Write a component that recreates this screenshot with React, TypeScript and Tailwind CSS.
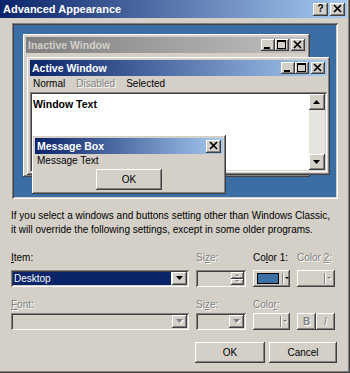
import React from "react";

const RAISED =
  "shadow-[inset_-1px_-1px_0_#404040,inset_1px_1px_0_#ffffff,inset_-2px_-2px_0_#808080,inset_2px_2px_0_#d4d0c8]";
const SUNKEN =
  "shadow-[inset_1px_1px_0_#808080,inset_-1px_-1px_0_#ffffff,inset_2px_2px_0_#404040,inset_-2px_-2px_0_#d4d0c8]";
const DIS = "text-[#808080] [text-shadow:1px_1px_0_#ffffff]";

function Tri({ up = false, disabled = false, w = 7, h = 4 }: { up?: boolean; disabled?: boolean; w?: number; h?: number }) {
  const pts = up ? `0,${h} ${w},${h} ${w / 2},0` : `0,0 ${w},0 ${w / 2},${h}`;
  return (
    <svg width={w + 1} height={h + 1} viewBox={`0 0 ${w + 1} ${h + 1}`}>
      {disabled && <polygon points={pts} fill="#ffffff" transform="translate(1,1)" />}
      <polygon points={pts} fill={disabled ? "#808080" : "#000000"} />
    </svg>
  );
}

function MinG() {
  return (
    <svg width="14" height="12" viewBox="0 0 14 12">
      <rect x="3" y="8" width="6" height="2" fill="#000" />
    </svg>
  );
}
function MaxG() {
  return (
    <svg width="14" height="12" viewBox="0 0 14 12">
      <rect x="2" y="1" width="9" height="2" fill="#000" />
      <rect x="2" y="1" width="1" height="9" fill="#000" />
      <rect x="10" y="1" width="1" height="9" fill="#000" />
      <rect x="2" y="9" width="9" height="1" fill="#000" />
    </svg>
  );
}
function CloseG() {
  return (
    <svg width="14" height="12" viewBox="0 0 14 12">
      <path d="M3 2 L10 9 M10 2 L3 9" stroke="#000" strokeWidth="1.7" fill="none" />
    </svg>
  );
}

function CapBtn({ children, className = "" }: { children: React.ReactNode; className?: string }) {
  return (
    <div className={`w-[14px] h-[12px] bg-[#d4d0c8] flex items-center justify-center ${RAISED} ${className}`}>{children}</div>
  );
}

function CapButtons() {
  return (
    <div className="flex items-center">
      <CapBtn>
        <MinG />
      </CapBtn>
      <CapBtn>
        <MaxG />
      </CapBtn>
      <CapBtn className="ml-[2px]">
        <CloseG />
      </CapBtn>
    </div>
  );
}

export default function App() {
  return (
    <div className="w-[350px] h-[373px] bg-[#d4d0c8] overflow-hidden relative font-[family-name:'Liberation_Sans',Arial,sans-serif] text-[10px] text-black shadow-[inset_-1px_-1px_0_#404040,inset_-2px_-2px_0_#808080]">
      {/* Title bar */}
      <div className="h-[18px] mr-[3px] flex items-center pl-[3px] pr-[2px] bg-[linear-gradient(to_right,#0a246a,#a6caf0)]">
        <span className="flex-1 text-white font-bold text-[11px] leading-none">Advanced Appearance</span>
        <div className="flex items-center">
          <div className={`w-[15px] h-[13px] bg-[#d4d0c8] flex items-center justify-center ${RAISED}`}>
            <span className="font-bold text-[10px] leading-none">?</span>
          </div>
          <div className={`ml-[2px] w-[15px] h-[13px] bg-[#d4d0c8] flex items-center justify-center ${RAISED}`}>
            <CloseG />
          </div>
        </div>
      </div>

      {/* Preview */}
      <div className={`ml-[12px] mt-[5px] w-[326px] h-[176px] relative bg-[#3a6ea5] ${SUNKEN}`}>
        {/* Inactive window */}
        <div className={`absolute left-[11px] top-[11px] w-[287px] h-[143px] bg-[#d4d0c8] p-[3px] ${RAISED}`}>
          <div className="h-[16px] flex items-center pl-[2px] pr-[2px] bg-[linear-gradient(to_right,#808080,#c0c0c0)]">
            <span className="flex-1 font-bold text-[10.5px] leading-none text-[#d4d0c8]">Inactive Window</span>
            <CapButtons />
          </div>
        </div>

        {/* Active window */}
        <div className={`absolute left-[15px] top-[34px] w-[303px] h-[118px] bg-[#d4d0c8] p-[3px] flex flex-col ${RAISED}`}>
          <div className="h-[16px] flex items-center pl-[2px] pr-[2px] bg-[linear-gradient(to_right,#0a246a,#a6caf0)]">
            <span className="flex-1 font-bold text-[10.5px] leading-none text-white">Active Window</span>
            <CapButtons />
          </div>
          <div className="h-[16px] flex items-center pl-[3px] gap-[11px] leading-none">
            <span>Normal</span>
            <span className={DIS}>Disabled</span>
            <span>Selected</span>
          </div>
          <div className={`flex-1 bg-white p-[2px] flex ${SUNKEN}`}>
            <div className="flex-1 pl-[1px] pt-[3px]">
              <span className="font-bold text-[10.5px] leading-none">Window Text</span>
            </div>
            <div className="w-[16px] flex flex-col bg-[#e6e4df]">
              <div className={`h-[16px] bg-[#d4d0c8] flex items-center justify-center ${RAISED}`}>
                <Tri up />
              </div>
              <div className="flex-1" />
              <div className={`h-[16px] bg-[#d4d0c8] flex items-center justify-center ${RAISED}`}>
                <Tri />
              </div>
            </div>
          </div>
        </div>

        {/* Message box */}
        <div className={`absolute left-[20px] top-[112px] w-[194px] h-[59px] bg-[#d4d0c8] p-[3px] flex flex-col ${RAISED}`}>
          <div className="h-[16px] flex items-center pl-[2px] pr-[2px] bg-[linear-gradient(to_right,#0a246a,#a6caf0)]">
            <span className="flex-1 font-bold text-[10.5px] leading-none text-white">Message Box</span>
            <div className={`w-[15px] h-[13px] bg-[#d4d0c8] flex items-center justify-center ${RAISED}`}>
              <CloseG />
            </div>
          </div>
          <div className="h-[14px] flex items-center pl-[2px] leading-none">Message Text</div>
          <div className="flex justify-center mt-[1px]">
            <div className={`w-[66px] h-[21px] bg-[#d4d0c8] flex items-center justify-center ${RAISED}`}>OK</div>
          </div>
        </div>
      </div>

      {/* Description */}
      <p className="ml-[11px] mt-[10px] leading-[14px] whitespace-nowrap">
        If you select a windows and buttons setting other than Windows Classic,
        <br />
        it will override the following settings, except in some older programs.
      </p>

      {/* Row 1 labels */}
      <div className="ml-[11px] mt-[14px] grid grid-cols-[178px_50px_37px_38px] gap-x-[7px] h-[14px] items-center leading-none">
        <span>
          <u>I</u>tem:
        </span>
        <span className={DIS}>
          Si<u>z</u>e:
        </span>
        <span>
          Co<u>l</u>or 1:
        </span>
        <span className={DIS}>
          Color <u>2</u>:
        </span>
      </div>

      {/* Row 1 controls */}
      <div className="ml-[11px] mt-[5px] grid grid-cols-[178px_50px_37px_38px] gap-x-[7px] h-[17px]">
        <div className={`bg-white p-[2px] flex ${SUNKEN}`}>
          <div className="flex-1 bg-[#0a246a] text-white flex items-center pl-[1px] leading-none mr-[1px]">
            Desktop
          </div>
          <div className={`w-[15px] bg-[#d4d0c8] flex items-center justify-center ${RAISED}`}>
            <Tri />
          </div>
        </div>
        <div className={`bg-[#d4d0c8] p-[2px] flex justify-end ${SUNKEN}`}>
          <div className="w-[13px] flex flex-col">
            <div className={`flex-1 bg-[#d4d0c8] flex items-center justify-center ${RAISED}`}>
              <Tri up disabled w={4} h={2} />
            </div>
            <div className={`flex-1 bg-[#d4d0c8] flex items-center justify-center ${RAISED}`}>
              <Tri disabled w={4} h={2} />
            </div>
          </div>
        </div>
        <div className={`bg-[#d4d0c8] flex items-center pl-[4px] ${RAISED}`}>
          <div className="w-[22px] h-[11px] bg-[#3a6ea5] border border-black" />
          <div className="ml-[3px] w-[2px] h-[11px] border-l border-l-[#808080] border-r border-r-white" />
          <div className="ml-[1px] flex items-center">
            <Tri w={4} h={2} />
          </div>
        </div>
        <div className={`bg-[#d4d0c8] flex items-center pl-[4px] ${RAISED}`}>
          <div className="w-[22px] h-[11px]" />
          <div className="ml-[1px] w-[2px] h-[11px] border-l border-l-[#808080] border-r border-r-white" />
          <div className="ml-[1px] flex items-center">
            <Tri disabled w={4} h={2} />
          </div>
        </div>
      </div>

      {/* Row 2 labels */}
      <div className="ml-[11px] mt-[11px] grid grid-cols-[178px_50px_37px_38px] gap-x-[7px] h-[14px] items-center leading-none">
        <span className={DIS}>
          <u>F</u>ont:
        </span>
        <span className={DIS}>
          Si<u>z</u>e:
        </span>
        <span className={DIS}>
          Colo<u>r</u>:
        </span>
        <span />
      </div>

      {/* Row 2 controls */}
      <div className="ml-[11px] mt-[1px] grid grid-cols-[178px_50px_37px_38px] gap-x-[7px] h-[17px]">
        <div className={`bg-[#d4d0c8] p-[2px] flex justify-end ${SUNKEN}`}>
          <div className={`w-[15px] bg-[#d4d0c8] flex items-center justify-center ${RAISED}`}>
            <Tri disabled />
          </div>
        </div>
        <div className={`bg-[#d4d0c8] p-[2px] flex justify-end ${SUNKEN}`}>
          <div className={`w-[15px] bg-[#d4d0c8] flex items-center justify-center ${RAISED}`}>
            <Tri disabled />
          </div>
        </div>
        <div className={`bg-[#d4d0c8] flex items-center pl-[4px] ${RAISED}`}>
          <div className="w-[22px] h-[11px]" />
          <div className="ml-[1px] w-[2px] h-[11px] border-l border-l-[#808080] border-r border-r-white" />
          <div className="ml-[1px] flex items-center">
            <Tri disabled w={4} h={2} />
          </div>
        </div>
        <div className="flex">
          <div className={`w-[19px] bg-[#d4d0c8] flex items-center justify-center font-bold leading-none ${RAISED} ${DIS}`}>B</div>
          <div className={`w-[19px] bg-[#d4d0c8] flex items-center justify-center italic leading-none ${RAISED} ${DIS}`}>I</div>
        </div>
      </div>

      {/* Buttons */}
      <div className="ml-[195px] mt-[12px] flex gap-[4px] h-[21px]">
        <div className={`w-[70px] bg-[#d4d0c8] flex items-center justify-center leading-none ${RAISED}`}>OK</div>
        <div className={`w-[68px] bg-[#d4d0c8] flex items-center justify-center leading-none ${RAISED}`}>Cancel</div>
      </div>
    </div>
  );
}
